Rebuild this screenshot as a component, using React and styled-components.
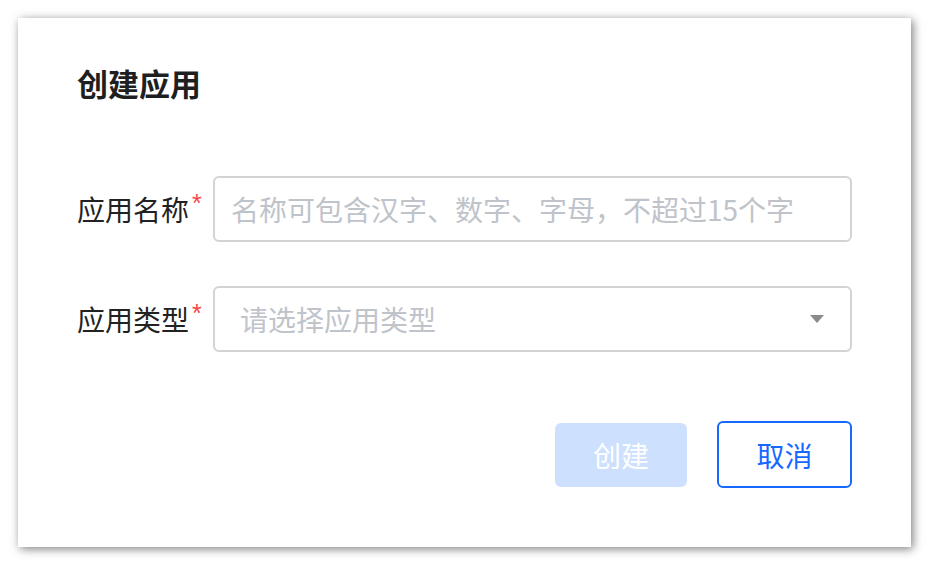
import React from "react";
import styled, { createGlobalStyle } from "styled-components";

const Global = createGlobalStyle`
  html, body { margin: 0; padding: 0; background: #ffffff; }
  body { font-family: "Noto Sans CJK SC", "Noto Sans", sans-serif; }
  * { box-sizing: border-box; }
`;

const Page = styled.div`
  padding: 18px;
  width: 929px;
  height: 565px;
`;

const Dialog = styled.div`
  width: 893px;
  height: 529px;
  background: #fff;
  box-shadow: 2px 2px 9px rgba(0, 0, 0, 0.5);
  padding: 44px 59px 59px 59px;
  display: flex;
  flex-direction: column;
`;

const Title = styled.h2`
  margin: 0;
  font-size: 31px;
  line-height: 42px;
  font-weight: 700;
  color: #1f1f1f;
`;

const Form = styled.div`
  margin-top: 72px;
  display: flex;
  flex-direction: column;
  gap: 44px;
`;

const Row = styled.div`
  display: flex;
  align-items: center;
`;

const Label = styled.label`
  width: 136px;
  flex: none;
  font-size: 28px;
  line-height: 40px;
  color: #222;
  display: flex;
  align-items: flex-start;
`;

const Star = styled.span`
  color: #f5484a;
  font-family: "Liberation Sans", sans-serif;
  font-size: 25px;
  line-height: 25px;
  margin-left: 3px;
  margin-top: 2px;
`;

const Field = styled.div`
  flex: 1;
  height: 66px;
  border: 2px solid #d3d3d3;
  border-radius: 6px;
  display: flex;
  align-items: center;
  padding-left: ${(p) => p.$pad}px;
  padding-right: 26px;
`;

const Placeholder = styled.span`
  flex: 1;
  font-size: 28px;
  color: #bfc3ca;
  white-space: nowrap;
`;

const Caret = styled.span`
  width: 0;
  height: 0;
  border-left: 7px solid transparent;
  border-right: 7px solid transparent;
  border-top: 8px solid #8a8a8a;
`;

const Actions = styled.div`
  margin-top: 69px;
  display: flex;
  justify-content: flex-end;
  align-items: center;
  gap: 30px;
`;

const Button = styled.button`
  font-family: inherit;
  font-size: 28px;
  border-radius: 6px;
  cursor: pointer;
  display: flex;
  align-items: center;
  justify-content: center;
  padding: 0;
  ${(p) =>
    p.$primary
      ? `width: 132px; height: 64px; background: #cde1ff; color: #fff; border: none;`
      : `width: 135px; height: 67px; background: #fff; color: #1668ff; border: 2px solid #1668ff;`}
`;

export default function App() {
  return (
    <>
      <Global />
      <Page>
        <Dialog>
          <Title>创建应用</Title>
          <Form>
            <Row>
              <Label>
                应用名称<Star>*</Star>
              </Label>
              <Field $pad={16}>
                <Placeholder>名称可包含汉字、数字、字母，不超过15个字</Placeholder>
              </Field>
            </Row>
            <Row>
              <Label>
                应用类型<Star>*</Star>
              </Label>
              <Field $pad={25}>
                <Placeholder>请选择应用类型</Placeholder>
                <Caret />
              </Field>
            </Row>
          </Form>
          <Actions>
            <Button $primary>创建</Button>
            <Button>取消</Button>
          </Actions>
        </Dialog>
      </Page>
    </>
  );
}
